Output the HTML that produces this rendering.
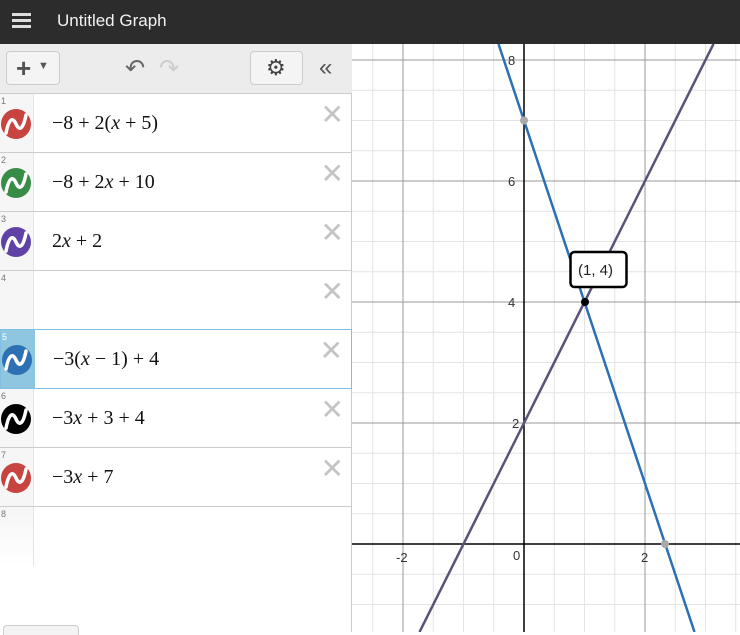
<!DOCTYPE html>
<html><head><meta charset="utf-8"><style>
*{margin:0;padding:0;box-sizing:border-box}
body{width:740px;height:632px;overflow:hidden;background:#fff;font-family:"Liberation Sans",sans-serif;position:relative}
#top{position:absolute;left:0;top:0;width:740px;height:44px;background:#2c2c2c}
#top .t{position:absolute;left:57px;top:11px;color:#f2f2f2;font-size:17px}
#left{position:absolute;left:0;top:44px;width:352px;height:588px;background:#fff;border-right:1px solid #ccc}
#tb{position:absolute;left:0;top:0;width:352px;height:50px;background:#ececec;border-bottom:1px solid #ccc}
.btn{position:absolute;top:7px;height:34px;border:1px solid #ccc;border-radius:4px;background:#f4f4f4}
.row{position:absolute;left:0;width:352px;height:59px;border-bottom:1px solid #ccc}
.num{position:absolute;left:1px;top:2px;font-size:9px;color:#777}
.strip{position:absolute;left:0;top:0;width:34px;height:100%;background:#f6f6f6;border-right:1px solid #e4e4e4}
.ic{position:absolute;left:1px;top:15px;width:30px;height:30px;border-radius:50%}
.ex{position:absolute;left:52px;top:18px;font-family:"Liberation Serif",serif;font-size:20px;color:#111}
.x{position:absolute;right:8px;top:4px;font-size:28px;color:#c4c4c4;font-family:"DejaVu Sans",sans-serif;font-weight:200}
i{font-style:italic}
</style></head><body>
<div id="top">
 <div style="position:absolute;left:12px;top:13px;width:19px;height:3px;background:#ddd;box-shadow:0 6px 0 #ddd,0 12px 0 #ddd"></div>
 <div class="t">Untitled Graph</div>
</div>
<svg style="position:absolute;left:352px;top:44px" width="388" height="588" viewBox="352 44 388 588">
<g stroke="#e4e4e4" stroke-width="1">
<line x1="372.75" y1="44" x2="372.75" y2="632"/><line x1="433.25" y1="44" x2="433.25" y2="632"/><line x1="463.5" y1="44" x2="463.5" y2="632"/><line x1="493.75" y1="44" x2="493.75" y2="632"/><line x1="554.25" y1="44" x2="554.25" y2="632"/><line x1="584.5" y1="44" x2="584.5" y2="632"/><line x1="614.75" y1="44" x2="614.75" y2="632"/><line x1="675.25" y1="44" x2="675.25" y2="632"/><line x1="705.5" y1="44" x2="705.5" y2="632"/><line x1="735.75" y1="44" x2="735.75" y2="632"/>
<line y1="604.5" x1="352" y2="604.5" x2="740"/><line y1="574.25" x1="352" y2="574.25" x2="740"/><line y1="513.75" x1="352" y2="513.75" x2="740"/><line y1="483.5" x1="352" y2="483.5" x2="740"/><line y1="453.25" x1="352" y2="453.25" x2="740"/><line y1="392.75" x1="352" y2="392.75" x2="740"/><line y1="362.5" x1="352" y2="362.5" x2="740"/><line y1="332.25" x1="352" y2="332.25" x2="740"/><line y1="271.75" x1="352" y2="271.75" x2="740"/><line y1="241.5" x1="352" y2="241.5" x2="740"/><line y1="211.25" x1="352" y2="211.25" x2="740"/><line y1="150.75" x1="352" y2="150.75" x2="740"/><line y1="120.5" x1="352" y2="120.5" x2="740"/><line y1="90.25" x1="352" y2="90.25" x2="740"/>
</g>
<g stroke="#9a9a9a" stroke-width="1">
<line x1="403" y1="44" x2="403" y2="632"/><line x1="645" y1="44" x2="645" y2="632"/>
<line x1="352" y1="423" x2="740" y2="423"/><line x1="352" y1="302" x2="740" y2="302"/><line x1="352" y1="181" x2="740" y2="181"/><line x1="352" y1="60" x2="740" y2="60"/>
</g>
<g stroke="#000" stroke-width="1.5"><line x1="524" y1="44" x2="524" y2="632"/><line x1="352" y1="544" x2="740" y2="544"/></g>
<g font-family="Liberation Sans" font-size="13" fill="#333">
<text x="508" y="65">8</text><text x="508" y="186">6</text><text x="508" y="307">4</text><text x="512" y="428">2</text>
<text x="396" y="562">-2</text><text x="513" y="560">0</text><text x="641" y="562">2</text>
</g>
<line x1="419.5" y1="632" x2="713.5" y2="44" stroke="#5a5278" stroke-width="2.5"/>
<line x1="498.5" y1="44" x2="694.5" y2="632" stroke="#2d70b3" stroke-width="2.5"/>
<circle cx="524" cy="120.5" r="4" fill="#aaa"/><circle cx="665" cy="544" r="4" fill="#aaa"/>
<circle cx="585" cy="302" r="4" fill="#000"/>
<rect x="570.5" y="252" width="56" height="35" rx="4" fill="#fff" stroke="#000" stroke-width="2.5"/>
<text x="578" y="275" font-family="Liberation Sans" font-size="15" fill="#222">(1, 4)</text>
</svg>
<div id="left">
 <div id="tb">
  <div class="btn" style="left:6px;width:54px"><span style="position:absolute;left:9px;top:1px;font-size:26px;color:#555;font-weight:bold">+</span><span style="position:absolute;left:31px;top:8px;font-size:11px;color:#555">▼</span></div>
  <span style="position:absolute;left:125px;top:10px;font-size:24px;color:#666">↶</span>
  <span style="position:absolute;left:159px;top:10px;font-size:24px;color:#ccc">↷</span>
  <div class="btn" style="left:250px;width:53px"><span style="position:absolute;left:15px;top:3px;font-size:22px;color:#444">⚙</span></div>
  <span style="position:absolute;left:319px;top:10px;font-size:24px;color:#555">«</span>
 </div>
 <div class="row" style="top:50px"><div class="strip"></div><span class="num">1</span><div class="ic" style="background:#c74440"></div><div class="ex">−8 + 2(<i>x</i> + 5)</div><span class="x">✕</span></div>
 <div class="row" style="top:109px"><div class="strip"></div><span class="num">2</span><div class="ic" style="background:#388c46"></div><div class="ex">−8 + 2<i>x</i> + 10</div><span class="x">✕</span></div>
 <div class="row" style="top:168px"><div class="strip"></div><span class="num">3</span><div class="ic" style="background:#6042a6"></div><div class="ex">2<i>x</i> + 2</div><span class="x">✕</span></div>
 <div class="row" style="top:227px"><div class="strip"></div><span class="num">4</span><span class="x">✕</span></div>
 <div class="row" style="border:1px solid #80bfdf;height:60px;top:285px"><div class="strip" style="background:#8ec6e0;border:none"></div><span class="num" style="color:#fff">5</span><div class="ic" style="background:#2d70b3"></div><div class="ex">−3(<i>x</i> − 1) + 4</div><span class="x">✕</span></div>
 <div class="row" style="top:345px"><div class="strip"></div><span class="num">6</span><div class="ic" style="background:#000"></div><div class="ex">−3<i>x</i> + 3 + 4</div><span class="x">✕</span></div>
 <div class="row" style="top:404px"><div class="strip"></div><span class="num">7</span><div class="ic" style="background:#c74440"></div><div class="ex">−3<i>x</i> + 7</div><span class="x">✕</span></div>
 <div class="row" style="top:463px;border:none"><div class="strip" style="background:linear-gradient(#f6f6f6,#fff)"></div><span class="num">8</span></div>
 <div style="position:absolute;left:3px;top:581px;width:76px;height:10px;border:1px solid #ccc;border-bottom:none;border-radius:4px 4px 0 0;background:#f4f4f4"></div>
</div>
<svg style="position:absolute;left:0;top:0" width="36" height="632">
<g fill="none" stroke="#fff" stroke-width="3.5" stroke-linecap="round">
<path d="M6 133 C9 118,13 117,16 124 C19 131,23 130,26 115"/>
<path d="M6 192 C9 177,13 176,16 183 C19 190,23 189,26 174"/>
<path d="M6 251 C9 236,13 235,16 242 C19 249,23 248,26 233"/>
<path d="M6 369 C9 354,13 353,16 360 C19 367,23 366,26 351"/>
<path d="M6 428 C9 413,13 412,16 419 C19 426,23 425,26 410"/>
<path d="M6 487 C9 472,13 471,16 478 C19 485,23 484,26 469"/>
</g></svg>
</body></html>
